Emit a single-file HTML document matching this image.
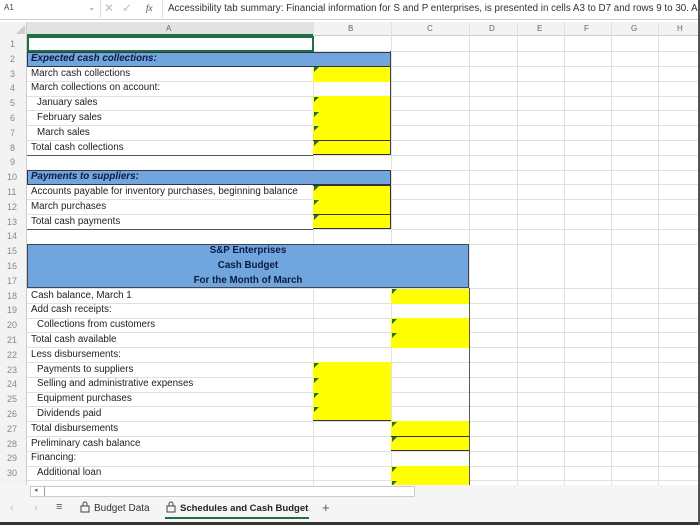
<!DOCTYPE html><html><head><style>
*{margin:0;padding:0;box-sizing:border-box}
body{width:700px;height:525px;overflow:hidden;background:#fff;font-family:"Liberation Sans",sans-serif;position:relative;color:#222}
.a{position:absolute}
.r{position:absolute;height:15px;top:calc(37px + (var(--r) - 1) * 14.8px);font-size:9.8px;line-height:14.8px;white-space:nowrap}
.n{font-size:9px}
.hl{position:absolute;left:0;right:0;height:1px;background:#e0e0e0}
.vl{position:absolute;top:22px;bottom:40px;width:1px;background:#e0e0e0}
.y{background:#ffff00}
.b{background:#70a5dd}
.t{position:absolute;width:0;height:0;border-top:5px solid #1e7040;border-right:5px solid transparent}
</style></head><body>
<div class="a" style="left:0;top:0;width:700px;height:20px;background:#fff;border-bottom:1px solid #d0d0d0"></div>
<div class="a" style="left:4px;top:3px;font-size:8px;color:#444">A1</div>
<div class="a" style="left:88px;top:2px;font-size:9px;color:#888">⌄</div>
<div class="a" style="left:100px;top:0;height:18px;width:1px;background:#ddd"></div>
<div class="a" style="left:104px;top:1px;font-size:12px;color:#bbb">✕</div>
<div class="a" style="left:122px;top:1px;font-size:12px;color:#bbb">✓</div>
<div class="a" style="left:146px;top:3px;font-size:9px;font-style:italic;color:#444;font-family:'Liberation Serif',serif">fx</div>
<div class="a" style="left:162px;top:0;height:18px;width:1px;background:#ddd"></div>
<div class="a" style="left:168px;top:3px;font-size:9.8px;color:#333;white-space:nowrap">Accessibility tab summary: Financial information for S and P enterprises, is presented in cells A3 to D7 and rows 9 to 30. A</div>
<div class="a" style="left:0;top:22px;width:700px;height:14px;background:#f3f3f3;border-bottom:1px solid #ccc"></div>
<div class="a" style="left:27px;top:22px;width:286px;height:14px;background:#e2e2e2;border-bottom:2px solid #1e7040"></div>
<div class="a" style="left:0;top:22px;width:27px;height:485px;background:#f3f3f3;border-right:1px solid #ccc"></div>
<div class="a" style="left:16px;top:25px;width:0;height:0;border-left:9px solid transparent;border-bottom:9px solid #ccc"></div>
<div class="a" style="top:24px;font-size:8px;color:#666;left:166px">A</div>
<div class="a" style="top:24px;font-size:8px;color:#666;left:348px">B</div>
<div class="a" style="top:24px;font-size:8px;color:#666;left:427px">C</div>
<div class="a" style="top:24px;font-size:8px;color:#666;left:489px">D</div>
<div class="a" style="top:24px;font-size:8px;color:#666;left:537px">E</div>
<div class="a" style="top:24px;font-size:8px;color:#666;left:584px">F</div>
<div class="a" style="top:24px;font-size:8px;color:#666;left:631px">G</div>
<div class="a" style="top:24px;font-size:8px;color:#666;left:677px">H</div>
<div class="vl" style="left:313px"></div><div class="vl" style="left:391px"></div><div class="vl" style="left:469px"></div><div class="vl" style="left:517px"></div><div class="vl" style="left:564px"></div><div class="vl" style="left:611px"></div><div class="vl" style="left:658px"></div>
<div style="position:absolute;left:27px;top:0;width:673px;height:485px">
<div class="hl" style="top:51px"></div><div class="hl" style="top:66px"></div><div class="hl" style="top:81px"></div><div class="hl" style="top:96px"></div><div class="hl" style="top:110px"></div><div class="hl" style="top:125px"></div><div class="hl" style="top:140px"></div><div class="hl" style="top:155px"></div><div class="hl" style="top:170px"></div><div class="hl" style="top:184px"></div><div class="hl" style="top:199px"></div><div class="hl" style="top:214px"></div><div class="hl" style="top:229px"></div><div class="hl" style="top:244px"></div><div class="hl" style="top:288px"></div><div class="hl" style="top:303px"></div><div class="hl" style="top:318px"></div><div class="hl" style="top:332px"></div><div class="hl" style="top:347px"></div><div class="hl" style="top:362px"></div><div class="hl" style="top:377px"></div><div class="hl" style="top:392px"></div><div class="hl" style="top:406px"></div><div class="hl" style="top:421px"></div><div class="hl" style="top:436px"></div><div class="hl" style="top:451px"></div><div class="hl" style="top:466px"></div><div class="hl" style="top:480px"></div>
</div>
<div class="r b" style="--r:2;left:27px;width:364px;border:1px solid #334"></div>
<div class="r b" style="--r:10;left:27px;width:364px;border:1px solid #334"></div>
<div class="a b" style="left:27px;top:244px;width:442px;height:44px;border:1px solid #445"></div>
<div class="r y" style="--r:3;left:313px;width:78px"></div>
<div class="a y" style="left:313px;top:96px;width:78px;height:59px;border-bottom:1px solid #333"></div>
<div class="a" style="left:313px;top:140px;width:78px;height:1px;background:#333"></div>
<div class="a y" style="left:313px;top:185px;width:78px;height:44px;border:1px solid #333;border-left:none"></div>
<div class="a" style="left:313px;top:214px;width:78px;height:1px;background:#333"></div>
<div class="r y" style="--r:18;left:391px;width:78px"></div>
<div class="a y" style="left:391px;top:318px;width:78px;height:30px"></div>
<div class="a y" style="left:313px;top:362px;width:78px;height:59px;border-bottom:1px solid #333"></div>
<div class="a y" style="left:391px;top:421px;width:78px;height:30px;border-bottom:1px solid #333"></div>
<div class="a" style="left:391px;top:436px;width:78px;height:1px;background:#333"></div>
<div class="a y" style="left:391px;top:466px;width:78px;height:19px"></div>
<div class="a" style="left:469px;top:288px;width:1px;height:197px;background:#555"></div>
<div class="a" style="left:390px;top:51px;width:1px;height:104px;background:#444"></div>
<div class="a" style="left:27px;top:155px;width:286px;height:1px;background:#555"></div>
<div class="a" style="left:27px;top:229px;width:286px;height:1px;background:#555"></div>
<div class="t" style="left:314px;top:67px"></div><div class="t" style="left:314px;top:97px"></div><div class="t" style="left:314px;top:112px"></div><div class="t" style="left:314px;top:126px"></div><div class="t" style="left:314px;top:141px"></div><div class="t" style="left:314px;top:186px"></div><div class="t" style="left:314px;top:200px"></div><div class="t" style="left:314px;top:215px"></div>
<div class="t" style="left:392px;top:289px"></div><div class="t" style="left:392px;top:319px"></div><div class="t" style="left:392px;top:333px"></div>
<div class="t" style="left:314px;top:363px"></div><div class="t" style="left:314px;top:378px"></div><div class="t" style="left:314px;top:393px"></div><div class="t" style="left:314px;top:407px"></div>
<div class="t" style="left:392px;top:422px"></div><div class="t" style="left:392px;top:437px"></div><div class="t" style="left:392px;top:467px"></div><div class="t" style="left:392px;top:481px"></div>
<div class="a" style="left:27px;top:36px;width:287px;height:16px;border:2px solid #1e7040"></div>
<div style="color:#888">
<div class="r n" style="--r:1;left:10px">1</div><div class="r n" style="--r:2;left:10px">2</div><div class="r n" style="--r:3;left:10px">3</div><div class="r n" style="--r:4;left:10px">4</div><div class="r n" style="--r:5;left:10px">5</div><div class="r n" style="--r:6;left:10px">6</div><div class="r n" style="--r:7;left:10px">7</div><div class="r n" style="--r:8;left:10px">8</div><div class="r n" style="--r:9;left:10px">9</div>
<div class="r n" style="--r:10;left:7px">10</div><div class="r n" style="--r:11;left:7px">11</div><div class="r n" style="--r:12;left:7px">12</div><div class="r n" style="--r:13;left:7px">13</div><div class="r n" style="--r:14;left:7px">14</div><div class="r n" style="--r:15;left:7px">15</div><div class="r n" style="--r:16;left:7px">16</div><div class="r n" style="--r:17;left:7px">17</div><div class="r n" style="--r:18;left:7px">18</div><div class="r n" style="--r:19;left:7px">19</div><div class="r n" style="--r:20;left:7px">20</div><div class="r n" style="--r:21;left:7px">21</div><div class="r n" style="--r:22;left:7px">22</div><div class="r n" style="--r:23;left:7px">23</div><div class="r n" style="--r:24;left:7px">24</div><div class="r n" style="--r:25;left:7px">25</div><div class="r n" style="--r:26;left:7px">26</div><div class="r n" style="--r:27;left:7px">27</div><div class="r n" style="--r:28;left:7px">28</div><div class="r n" style="--r:29;left:7px">29</div><div class="r n" style="--r:30;left:7px">30</div>
</div>
<div class="r" style="--r:2;left:31px;font-weight:bold;font-style:italic;color:#0d1a40">Expected cash collections:</div>
<div class="r" style="--r:3;left:31px">March cash collections</div>
<div class="r" style="--r:4;left:31px">March collections on account:</div>
<div class="r" style="--r:5;left:37px">January sales</div>
<div class="r" style="--r:6;left:37px">February sales</div>
<div class="r" style="--r:7;left:37px">March sales</div>
<div class="r" style="--r:8;left:31px">Total cash collections</div>
<div class="r" style="--r:10;left:31px;font-weight:bold;font-style:italic;color:#0d1a40">Payments to suppliers:</div>
<div class="r" style="--r:11;left:31px">Accounts payable for inventory purchases, beginning balance</div>
<div class="r" style="--r:12;left:31px">March purchases</div>
<div class="r" style="--r:13;left:31px">Total cash payments</div>
<div class="r" style="--r:15;left:27px;width:442px;text-align:center;font-weight:bold;color:#0d1a40">S&amp;P Enterprises</div>
<div class="r" style="--r:16;left:27px;width:442px;text-align:center;font-weight:bold;color:#0d1a40">Cash Budget</div>
<div class="r" style="--r:17;left:27px;width:442px;text-align:center;font-weight:bold;color:#0d1a40">For the Month of March</div>
<div class="r" style="--r:18;left:31px">Cash balance, March 1</div>
<div class="r" style="--r:19;left:31px">Add cash receipts:</div>
<div class="r" style="--r:20;left:37px">Collections from customers</div>
<div class="r" style="--r:21;left:31px">Total cash available</div>
<div class="r" style="--r:22;left:31px">Less disbursements:</div>
<div class="r" style="--r:23;left:37px">Payments to suppliers</div>
<div class="r" style="--r:24;left:37px">Selling and administrative expenses</div>
<div class="r" style="--r:25;left:37px">Equipment purchases</div>
<div class="r" style="--r:26;left:37px">Dividends paid</div>
<div class="r" style="--r:27;left:31px">Total disbursements</div>
<div class="r" style="--r:28;left:31px">Preliminary cash balance</div>
<div class="r" style="--r:29;left:31px">Financing:</div>
<div class="r" style="--r:30;left:37px">Additional loan</div>
<div class="a" style="left:0;top:485px;width:700px;height:40px;background:#f5f5f5"></div>
<div class="a" style="left:30px;top:486px;width:385px;height:11px;background:#fff;border:1px solid #ccc"></div>
<div class="a" style="left:34px;top:486px;font-size:7px;color:#666">◂</div>
<div class="a" style="left:44px;top:487px;width:1px;height:9px;background:#999"></div>
<div class="a" style="left:10px;top:502px;font-size:11px;color:#bbb">‹</div>
<div class="a" style="left:34px;top:502px;font-size:11px;color:#bbb">›</div>
<div class="a" style="left:56px;top:501px;font-size:11px;color:#555">≡</div>
<svg class="a" style="left:80px;top:501px" width="10" height="12" viewBox="0 0 10 12"><rect x="1" y="5" width="8" height="6" fill="none" stroke="#444"/><path d="M3 5V3a2 2 0 0 1 4 0v2" fill="none" stroke="#444"/></svg>
<div class="a" style="left:94px;top:503px;font-size:10px;color:#333">Budget Data</div>
<svg class="a" style="left:166px;top:501px" width="10" height="12" viewBox="0 0 10 12"><rect x="1" y="5" width="8" height="6" fill="none" stroke="#444"/><path d="M3 5V3a2 2 0 0 1 4 0v2" fill="none" stroke="#444"/></svg>
<div class="a" style="left:180px;top:503px;font-size:9.5px;font-weight:bold;color:#222">Schedules and Cash Budget</div>
<div class="a" style="left:165px;top:517px;width:144px;height:2px;background:#1e7040"></div>
<div class="a" style="left:322px;top:500px;font-size:13px;color:#555">+</div>
<div class="a" style="left:0;top:522px;width:700px;height:3px;background:#333"></div>
<div class="a" style="left:698px;top:0;width:2px;height:525px;background:#555"></div>
</body></html>
